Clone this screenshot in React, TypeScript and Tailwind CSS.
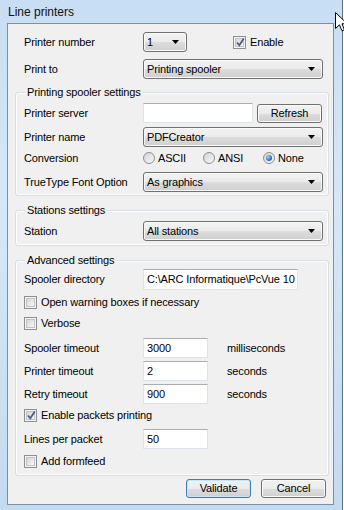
import type { ReactNode } from 'react';

const FONT = "font-['Liberation_Sans',Arial,sans-serif]";

function Select({ value, width }: { value: string; width: string }) {
  return (
    <div
      className={`${width} flex h-[20px] items-center justify-between rounded-[3px] border border-[#707070] bg-[linear-gradient(#f2f2f2,#ebebeb_50%,#dddddd_50%,#cfcfcf)] pl-[3px] pr-[7px] shadow-[inset_0_0_0_1px_#fafafa]`}
    >
      <span className="leading-none">{value}</span>
      <svg width="7" height="4" viewBox="0 0 7 4">
        <path d="M0 0H7L3.5 4Z" fill="#000" />
      </svg>
    </div>
  );
}

function TextBox({ value, width, height = 'h-[20px]' }: { value: string; width: string; height?: string }) {
  return (
    <div
      className={`${width} ${height} flex items-center overflow-hidden whitespace-nowrap border border-[#dde3ea] border-t-[#abadb3] bg-white pl-[3px]`}
    >
      {value}
    </div>
  );
}

function Checkbox({ label, checked = false }: { label: string; checked?: boolean }) {
  return (
    <div className="flex items-center gap-[4px]">
      <div className="flex h-[13px] w-[13px] items-center justify-center border border-[#8f8f8f] bg-[#f4f4f4] p-[1px]">
        <div className="relative h-full w-full border border-[#c0c3c8] bg-[linear-gradient(135deg,#d3d6da,#f7f7f7)]">
          {checked && (
            <svg className="absolute -left-[1px] -top-[2px]" width="11" height="11" viewBox="0 0 11 11">
              <path d="M2 5.5L4.3 8.3L8.8 1.5" fill="none" stroke="#4a5d8a" strokeWidth="1.8" />
            </svg>
          )}
        </div>
      </div>
      <span className="leading-none">{label}</span>
    </div>
  );
}

function Radio({ label, checked = false }: { label: string; checked?: boolean }) {
  return (
    <div className="flex w-[62px] items-center gap-[3px]">
      <div className="flex h-[12px] w-[12px] items-center justify-center rounded-full border border-[#8f8f8f] bg-[linear-gradient(135deg,#d0d3d7,#f8f8f8)]">
        {checked && (
          <div className="h-[6px] w-[6px] rounded-full bg-[radial-gradient(circle_at_35%_35%,#a9d4ff,#2b71c2_60%,#163f7a)]" />
        )}
      </div>
      <span className="leading-none">{label}</span>
    </div>
  );
}

function Button({ label, primary = false }: { label: string; primary?: boolean }) {
  return (
    <div
      className={`flex h-[19px] w-[65px] items-center justify-center rounded-[3px] border bg-[linear-gradient(#f2f2f2,#ebebeb_50%,#dddddd_50%,#cfcfcf)] ${
        primary
          ? 'border-[#3c7fb1] shadow-[inset_0_0_0_1px_#c4e5f6]'
          : 'border-[#707070] shadow-[inset_0_0_0_1px_#fafafa]'
      }`}
    >
      {label}
    </div>
  );
}

function Group({ title, className, children }: { title: string; className: string; children: ReactNode }) {
  return (
    <div className={`relative mr-[4px] ml-[7px] rounded-[3px] border border-[#d5dfe5] pl-[8px] pr-[5px] shadow-[inset_0_0_0_1px_#ffffff] ${className}`}>
      <span className="absolute -top-[7px] left-[9px] bg-[#f0f0f0] px-[2px] leading-[13px]">{title}</span>
      {children}
    </div>
  );
}

function Row({ label, children, className = '' }: { label: string; children: ReactNode; className?: string }) {
  return (
    <div className={`flex items-center ${className}`}>
      <span className="w-[119px] shrink-0 leading-none">{label}</span>
      {children}
    </div>
  );
}

export default function App() {
  return (
    <div className={`relative h-[510px] w-[344px] overflow-hidden bg-white text-[11px] tracking-[-0.15px] text-black ${FONT}`}>
      <div className="flex h-[510px] w-[343px] flex-col border-r border-[#5f6f82] bg-[linear-gradient(#c8def4,#d6e7f8_40%,#c4daf1)]">
        <div className="flex h-[23px] shrink-0 items-center pl-[8px] text-[12px] tracking-normal text-[#111]">
          Line printers
        </div>
        <div className="ml-[7px] flex h-[482px] w-[327px] flex-col border border-[#7e8fa3] bg-[#f0f0f0]">
          <Row label="Printer number" className="mt-[8px] pl-[16px]">
            <Select value="1" width="w-[44px]" />
            <div className="ml-[46px]">
              <Checkbox label="Enable" checked />
            </div>
          </Row>
          <Row label="Print to" className="mt-[7px] pl-[16px]">
            <Select value="Printing spooler" width="w-[180px]" />
          </Row>

          <Group title="Printing spooler settings" className="mt-[13px] pt-[10px] pb-[3px]">
            <Row label="Printer server">
              <TextBox value="" width="w-[110px]" />
              <div className="ml-[4px]">
                <Button label="Refresh" />
              </div>
            </Row>
            <Row label="Printer name" className="mt-[4px]">
              <Select value="PDFCreator" width="w-[180px]" />
            </Row>
            <Row label="Conversion" className="mt-[2px] h-[18px]">
              <Radio label="ASCII" />
              <Radio label="ANSI" />
              <Radio label="None" checked />
            </Row>
            <Row label="TrueType Font Option" className="mt-[5px]">
              <Select value="As graphics" width="w-[180px]" />
            </Row>
          </Group>

          <Group title="Stations settings" className="mt-[14px] pt-[10px] pb-[4px]">
            <Row label="Station">
              <Select value="All stations" width="w-[180px]" />
            </Row>
          </Group>

          <Group title="Advanced settings" className="mt-[14px] pt-[8px] pb-[7px]">
            <Row label="Spooler directory">
              <TextBox value="C:\ARC Informatique\PcVue 10" width="w-[155px]" height="h-[21px]" />
            </Row>
            <div className="mt-[5px] flex h-[14px] items-center">
              <Checkbox label="Open warning boxes if necessary" />
            </div>
            <div className="mt-[7px] flex h-[14px] items-center">
              <Checkbox label="Verbose" />
            </div>
            <Row label="Spooler timeout" className="mt-[8px]">
              <TextBox value="3000" width="w-[65px]" />
              <span className="ml-[19px]">milliseconds</span>
            </Row>
            <Row label="Printer timeout" className="mt-[3px]">
              <TextBox value="2" width="w-[65px]" />
              <span className="ml-[19px]">seconds</span>
            </Row>
            <Row label="Retry timeout" className="mt-[3px]">
              <TextBox value="900" width="w-[65px]" />
              <span className="ml-[19px]">seconds</span>
            </Row>
            <div className="mt-[4px] flex h-[14px] items-center">
              <Checkbox label="Enable packets printing" checked />
            </div>
            <Row label="Lines per packet" className="mt-[7px]">
              <TextBox value="50" width="w-[65px]" />
            </Row>
            <div className="mt-[5px] flex h-[14px] items-center">
              <Checkbox label="Add formfeed" />
            </div>
          </Group>

          <div className="mt-[3px] flex justify-end gap-[10px] pr-[7px]">
            <Button label="Validate" primary />
            <Button label="Cancel" />
          </div>
        </div>
      </div>

      <svg className="absolute left-[335px] top-[12px]" width="13" height="20" viewBox="0 0 13 20">
        <path d="M0.5 0.5V16.5L4.5 12.8L7 18.8L9.4 17.8L7 11.8H12.3Z" fill="#fff" stroke="#000" strokeWidth="1" />
      </svg>
    </div>
  );
}
